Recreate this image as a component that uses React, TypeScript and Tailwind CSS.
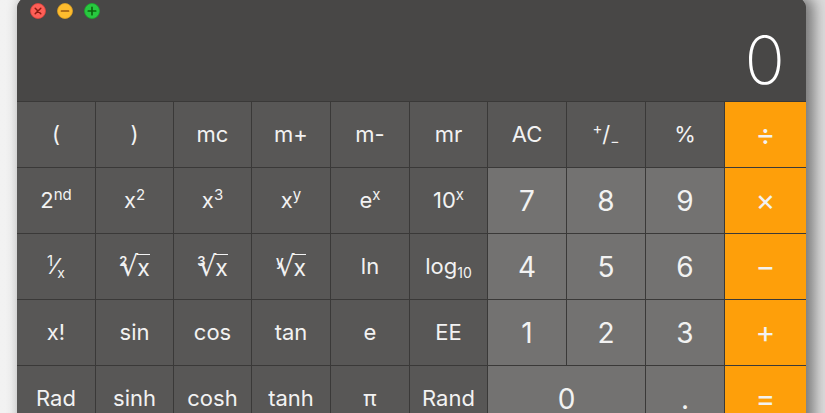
import React from 'react';

type Kind = 'fn' | 'num' | 'op';

type Key = {
  label: React.ReactNode;
  kind: Kind;
  span?: boolean;
};

const Sup = ({ children }: { children: React.ReactNode }) => (
  <span className="relative -top-[8px] text-[15px] leading-none">{children}</span>
);

const Sub = ({ children }: { children: React.ReactNode }) => (
  <span className="relative top-[4px] text-[14px] leading-none">{children}</span>
);

// Root sign with a small index sitting on its shoulder and a bar over the x
const Root = ({ index }: { index: string }) => (
  <span className="inline-flex items-end leading-none">
    <span className="relative -top-[13px] -mr-[7px] text-[13px] font-semibold leading-none">{index}</span>
    <span className="text-[28px] leading-none" style={{ fontFamily: '"DejaVu Sans", sans-serif' }}>√</span>
    <span className="border-t-[1.5px] border-[#f2f2f2] pt-[2px] pb-[1px] leading-none text-[23px] -ml-[1px]">x</span>
  </span>
);

const rows: Key[][] = [
  [
    { label: '(', kind: 'fn' },
    { label: ')', kind: 'fn' },
    { label: 'mc', kind: 'fn' },
    { label: 'm+', kind: 'fn' },
    { label: 'm-', kind: 'fn' },
    { label: 'mr', kind: 'fn' },
    { label: 'AC', kind: 'fn' },
    { label: <span><Sup>+</Sup>/<Sub>−</Sub></span>, kind: 'fn' },
    { label: '%', kind: 'fn' },
    { label: '÷', kind: 'op' },
  ],
  [
    { label: <span>2<Sup>nd</Sup></span>, kind: 'fn' },
    { label: <span>x<Sup>2</Sup></span>, kind: 'fn' },
    { label: <span>x<Sup>3</Sup></span>, kind: 'fn' },
    { label: <span>x<Sup>y</Sup></span>, kind: 'fn' },
    { label: <span>e<Sup>x</Sup></span>, kind: 'fn' },
    { label: <span>10<Sup>x</Sup></span>, kind: 'fn' },
    { label: '7', kind: 'num' },
    { label: '8', kind: 'num' },
    { label: '9', kind: 'num' },
    { label: '×', kind: 'op' },
  ],
  [
    { label: <span><Sup>1</Sup>⁄<Sub>x</Sub></span>, kind: 'fn' },
    { label: <Root index="2" />, kind: 'fn' },
    { label: <Root index="3" />, kind: 'fn' },
    { label: <Root index="y" />, kind: 'fn' },
    { label: 'ln', kind: 'fn' },
    { label: <span>log<Sub>10</Sub></span>, kind: 'fn' },
    { label: '4', kind: 'num' },
    { label: '5', kind: 'num' },
    { label: '6', kind: 'num' },
    { label: '−', kind: 'op' },
  ],
  [
    { label: 'x!', kind: 'fn' },
    { label: 'sin', kind: 'fn' },
    { label: 'cos', kind: 'fn' },
    { label: 'tan', kind: 'fn' },
    { label: 'e', kind: 'fn' },
    { label: 'EE', kind: 'fn' },
    { label: '1', kind: 'num' },
    { label: '2', kind: 'num' },
    { label: '3', kind: 'num' },
    { label: '+', kind: 'op' },
  ],
  [
    { label: 'Rad', kind: 'fn' },
    { label: 'sinh', kind: 'fn' },
    { label: 'cosh', kind: 'fn' },
    { label: 'tanh', kind: 'fn' },
    { label: 'π', kind: 'fn' },
    { label: 'Rand', kind: 'fn' },
    { label: '0', kind: 'num', span: true },
    { label: '.', kind: 'num' },
    { label: '=', kind: 'op' },
  ],
];

const kindClass: Record<Kind, string> = {
  fn: 'bg-[#585756] text-[22px]',
  num: 'bg-[#737271] text-[28px]',
  op: 'bg-[#fe9f0a] text-[30px]',
};

const TrafficLights = () => (
  <div className="flex items-center gap-[11px] pl-[13px] pt-[5px]">
    <svg width="16" height="16" viewBox="0 0 16 16">
      <circle cx="8" cy="8" r="7.5" fill="#ff5f57" stroke="#e0443e" strokeWidth="0.8" />
      <path d="M5.2 5.2 L10.8 10.8 M10.8 5.2 L5.2 10.8" stroke="#8c1a10" strokeWidth="1.5" strokeLinecap="round" />
    </svg>
    <svg width="16" height="16" viewBox="0 0 16 16">
      <circle cx="8" cy="8" r="7.5" fill="#febc2e" stroke="#dea123" strokeWidth="0.8" />
      <path d="M4.5 8 L11.5 8" stroke="#985712" strokeWidth="1.7" strokeLinecap="round" />
    </svg>
    <svg width="16" height="16" viewBox="0 0 16 16">
      <circle cx="8" cy="8" r="7.5" fill="#28c840" stroke="#1aab29" strokeWidth="0.8" />
      <path d="M8 4.3 L8 11.7 M4.3 8 L11.7 8" stroke="#0b650d" strokeWidth="1.7" strokeLinecap="round" />
    </svg>
  </div>
);

const App = () => {
  return (
    <div
      className="w-full h-[413px] overflow-hidden bg-gradient-to-r from-[#f2f2f2] via-[#e6e6e6] to-[#dcdcdc] pl-[17px]"
      style={{ fontFamily: 'Inter, "Liberation Sans", sans-serif' }}
    >
      <div className="w-[789px] -mt-[2px] rounded-t-[10px] overflow-hidden bg-[#3a3938] shadow-[6px_0_14px_2px_rgba(0,0,0,0.45)]">
        {/* Title bar + display */}
        <div className="h-[103px] bg-[#484746] flex flex-col">
          <TrafficLights />
          <div className="flex-1 flex items-end justify-end pr-[21px] pb-[8px]">
            <span className="text-[67px] leading-none font-extralight text-white">0</span>
          </div>
        </div>

        {/* Keypad */}
        <div className="grid grid-cols-[78px_77px_77px_78px_78px_77px_78px_78px_78px_1fr] auto-rows-[65px] gap-px pt-px">
          {rows.flat().map((key, idx) => (
            <div
              key={idx}
              className={`flex items-center justify-center text-[#f2f2f2] ${kindClass[key.kind]} ${key.span ? 'col-span-2' : ''}`}
            >
              {key.label}
            </div>
          ))}
        </div>
      </div>
    </div>
  );
};

export default App;
